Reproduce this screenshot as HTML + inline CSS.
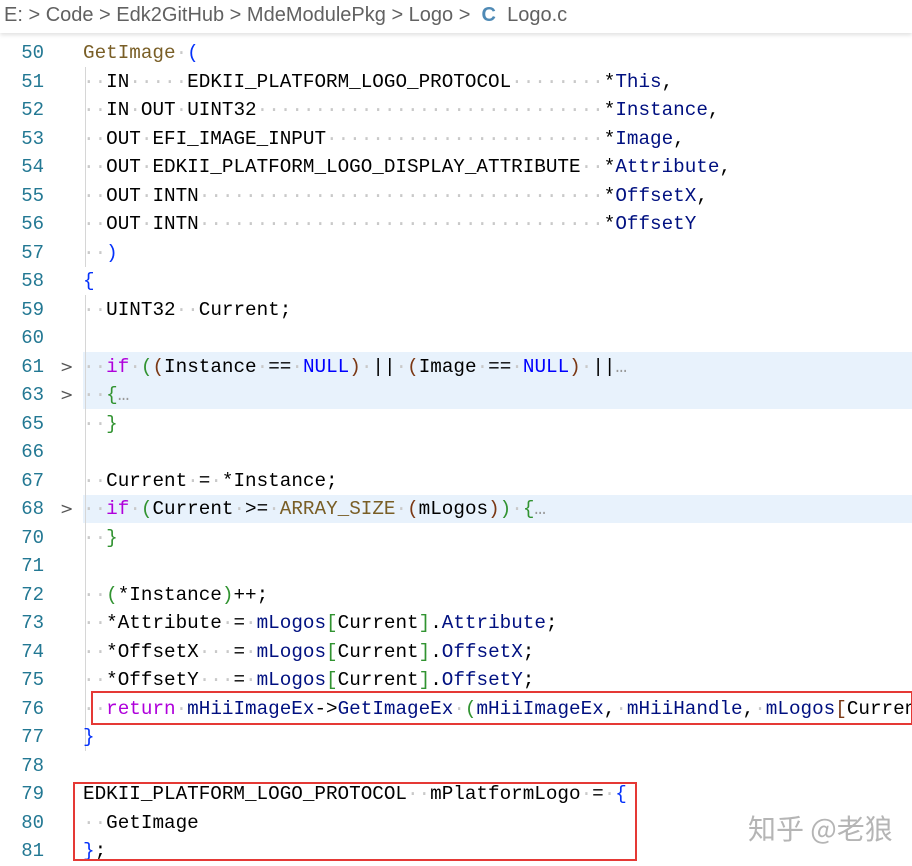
<!DOCTYPE html>
<html><head><meta charset="utf-8"><style>
body{margin:0;width:912px;height:866px;background:#fff;position:relative;overflow:hidden;font-family:"Liberation Mono",monospace}
.hdr{position:absolute;left:0;top:0;width:912px;height:33px;background:#fff;box-shadow:0 2px 4px rgba(0,0,0,.12);font-family:"Liberation Sans",sans-serif;font-size:20px;color:#616161;line-height:31px;white-space:pre;padding-left:4px;box-sizing:border-box}
.hdr b{color:#4f8ab5;font-weight:bold}
.hl{position:absolute;left:83px;width:829px;background:#e8f2fc}
.ln{position:absolute;left:0;width:44px;text-align:right;font-size:19px;color:#237893;height:28px;line-height:28px}
.cv{position:absolute;left:60px;font-family:"DejaVu Sans",sans-serif;font-size:16px;color:#555;line-height:28px}
.c{position:absolute;left:83px;font-size:19.3px;white-space:pre;color:#000;height:28px;line-height:28px}
.w{color:#c9c9c9}
.f{color:#795e26}.v{color:#001080}.k{color:#af00db}.n{color:#0000ff}.b1{color:#0431fa}.b2{color:#319331}.b3{color:#7b3814}.g{color:#999}
.guide{position:absolute;left:85px;width:1px;background:#d6d6d6}
.box{position:absolute;border:2px solid #e53935}
.wm{position:absolute;left:748px;top:808px;font-family:"Noto Sans CJK SC",sans-serif;font-size:28px;color:#b5b5b5;white-space:pre}
</style></head><body>
<div class="hdr">E: &gt; Code &gt; Edk2GitHub &gt; MdeModulePkg &gt; Logo &gt;  <b>C</b>  Logo.c</div>
<div class="hl" style="top:352px;height:57px"></div>
<div class="hl" style="top:495px;height:28px"></div>
<div class="guide" style="top:67px;height:200px"></div>
<div class="guide" style="top:295px;height:456px"></div>

<div class="ln" style="top:39px">50</div><div class="c" style="top:39px"><span class="f">GetImage</span><span class="w">·</span><span class="b1">(</span></div>
<div class="ln" style="top:67.5px">51</div><div class="c" style="top:67.5px"><span class="w">··</span>IN<span class="w">·····</span>EDKII_PLATFORM_LOGO_PROTOCOL<span class="w">········</span>*<span class="v">This</span>,</div>
<div class="ln" style="top:96px">52</div><div class="c" style="top:96px"><span class="w">··</span>IN<span class="w">·</span>OUT<span class="w">·</span>UINT32<span class="w">······························</span>*<span class="v">Instance</span>,</div>
<div class="ln" style="top:124.5px">53</div><div class="c" style="top:124.5px"><span class="w">··</span>OUT<span class="w">·</span>EFI_IMAGE_INPUT<span class="w">························</span>*<span class="v">Image</span>,</div>
<div class="ln" style="top:153px">54</div><div class="c" style="top:153px"><span class="w">··</span>OUT<span class="w">·</span>EDKII_PLATFORM_LOGO_DISPLAY_ATTRIBUTE<span class="w">··</span>*<span class="v">Attribute</span>,</div>
<div class="ln" style="top:181.5px">55</div><div class="c" style="top:181.5px"><span class="w">··</span>OUT<span class="w">·</span>INTN<span class="w">···································</span>*<span class="v">OffsetX</span>,</div>
<div class="ln" style="top:210px">56</div><div class="c" style="top:210px"><span class="w">··</span>OUT<span class="w">·</span>INTN<span class="w">···································</span>*<span class="v">OffsetY</span></div>
<div class="ln" style="top:238.5px">57</div><div class="c" style="top:238.5px"><span class="w">··</span><span class="b1">)</span></div>
<div class="ln" style="top:267px">58</div><div class="c" style="top:267px"><span class="b1">{</span></div>
<div class="ln" style="top:295.5px">59</div><div class="c" style="top:295.5px"><span class="w">··</span>UINT32<span class="w">··</span>Current;</div>
<div class="ln" style="top:324px">60</div>
<div class="ln" style="top:352.5px">61</div><div class="cv" style="top:352.5px">&gt;</div><div class="c" style="top:352.5px"><span class="w">··</span><span class="k">if</span><span class="w">·</span><span class="b2">(</span><span class="b3">(</span>Instance<span class="w">·</span>==<span class="w">·</span><span class="n">NULL</span><span class="b3">)</span><span class="w">·</span>||<span class="w">·</span><span class="b3">(</span>Image<span class="w">·</span>==<span class="w">·</span><span class="n">NULL</span><span class="b3">)</span><span class="w">·</span>||<span class="g">…</span></div>
<div class="ln" style="top:381px">63</div><div class="cv" style="top:381px">&gt;</div><div class="c" style="top:381px"><span class="w">··</span><span class="b2">{</span><span class="g">…</span></div>
<div class="ln" style="top:409.5px">65</div><div class="c" style="top:409.5px"><span class="w">··</span><span class="b2">}</span></div>
<div class="ln" style="top:438px">66</div>
<div class="ln" style="top:466.5px">67</div><div class="c" style="top:466.5px"><span class="w">··</span>Current<span class="w">·</span>=<span class="w">·</span>*Instance;</div>
<div class="ln" style="top:495px">68</div><div class="cv" style="top:495px">&gt;</div><div class="c" style="top:495px"><span class="w">··</span><span class="k">if</span><span class="w">·</span><span class="b2">(</span>Current<span class="w">·</span>&gt;=<span class="w">·</span><span class="f">ARRAY_SIZE</span><span class="w">·</span><span class="b3">(</span>mLogos<span class="b3">)</span><span class="b2">)</span><span class="w">·</span><span class="b2">{</span><span class="g">…</span></div>
<div class="ln" style="top:523.5px">70</div><div class="c" style="top:523.5px"><span class="w">··</span><span class="b2">}</span></div>
<div class="ln" style="top:552px">71</div>
<div class="ln" style="top:580.5px">72</div><div class="c" style="top:580.5px"><span class="w">··</span><span class="b2">(</span>*Instance<span class="b2">)</span>++;</div>
<div class="ln" style="top:609px">73</div><div class="c" style="top:609px"><span class="w">··</span>*Attribute<span class="w">·</span>=<span class="w">·</span><span class="v">mLogos</span><span class="b2">[</span>Current<span class="b2">]</span>.<span class="v">Attribute</span>;</div>
<div class="ln" style="top:637.5px">74</div><div class="c" style="top:637.5px"><span class="w">··</span>*OffsetX<span class="w">···</span>=<span class="w">·</span><span class="v">mLogos</span><span class="b2">[</span>Current<span class="b2">]</span>.<span class="v">OffsetX</span>;</div>
<div class="ln" style="top:666px">75</div><div class="c" style="top:666px"><span class="w">··</span>*OffsetY<span class="w">···</span>=<span class="w">·</span><span class="v">mLogos</span><span class="b2">[</span>Current<span class="b2">]</span>.<span class="v">OffsetY</span>;</div>
<div class="ln" style="top:694.5px">76</div><div class="c" style="top:694.5px"><span class="w">··</span><span class="k">return</span><span class="w">·</span><span class="v">mHiiImageEx</span>-&gt;<span class="v">GetImageEx</span><span class="w">·</span><span class="b2">(</span><span class="v">mHiiImageEx</span>,<span class="w">·</span><span class="v">mHiiHandle</span>,<span class="w">·</span><span class="v">mLogos</span><span class="b3">[</span>Current]</div>
<div class="ln" style="top:723px">77</div><div class="c" style="top:723px"><span class="b1">}</span></div>
<div class="ln" style="top:751.5px">78</div>
<div class="ln" style="top:780px">79</div><div class="c" style="top:780px">EDKII_PLATFORM_LOGO_PROTOCOL<span class="w">··</span>mPlatformLogo<span class="w">·</span>=<span class="w">·</span><span class="b1">{</span></div>
<div class="ln" style="top:808.5px">80</div><div class="c" style="top:808.5px"><span class="w">··</span>GetImage</div>
<div class="ln" style="top:837px">81</div><div class="c" style="top:837px"><span class="b1">}</span>;</div>

<div class="box" style="left:91px;top:691px;width:818px;height:30px"></div>
<div class="box" style="left:73px;top:782px;width:560px;height:75px"></div>
<div class="wm">知乎 @老狼</div>
</body></html>
